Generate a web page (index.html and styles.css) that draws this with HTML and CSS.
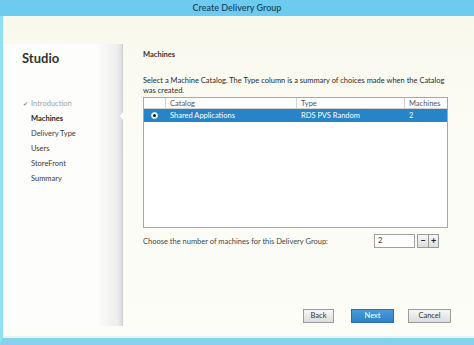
FILE: index.html
```html
<!DOCTYPE html>
<html>
<head>
<meta charset="utf-8">
<link rel="stylesheet" href="styles.css">
</head>
<body>
<div class="window">
  <div class="titlebar">Create Delivery Group</div>
  <div class="main">
    <aside class="sidebar">
      <div class="brand">Studio</div>
      <ul class="steps">
        <li class="step done"><span class="check">✔</span>Introduction</li>
        <li class="step current">Machines</li>
        <li class="step">Delivery Type</li>
        <li class="step">Users</li>
        <li class="step">StoreFront</li>
        <li class="step">Summary</li>
      </ul>
    </aside>
    <section class="content">
      <h2 class="heading">Machines</h2>
      <p class="desc">Select a Machine Catalog. The Type column is a summary of choices made when the Catalog was created.</p>
      <div class="table">
        <div class="row head">
          <div class="cell c-radio"></div>
          <div class="cell c-cat">Catalog</div>
          <div class="cell c-type">Type</div>
          <div class="cell c-mach">Machines</div>
        </div>
        <div class="row selected">
          <div class="cell c-radio"><span class="radio"></span></div>
          <div class="cell c-cat">Shared Applications</div>
          <div class="cell c-type">RDS PVS Random</div>
          <div class="cell c-mach">2</div>
        </div>
      </div>
      <div class="count">
        <span class="count-label">Choose the number of machines for this Delivery Group:</span>
        <div class="spinner">
          <div class="spin-input">2</div>
          <div class="spin-btns">
            <span class="spin-btn">−</span><span class="spin-btn">+</span>
          </div>
        </div>
      </div>
      <div class="actions">
        <button class="btn back">Back</button>
        <button class="btn primary next">Next</button>
        <button class="btn cancel">Cancel</button>
      </div>
    </section>
  </div>
</div>
</body>
</html>
```

FILE: styles.css
```css
* { box-sizing: border-box; }
html, body { margin: 0; padding: 0; }
body {
  width: 474px;
  height: 345px;
  overflow: hidden;
  font-family: Lato, "Open Sans", sans-serif;
  color: #333;
  background: #fbfbf4;
}
.window {
  width: 474px;
  height: 345px;
  display: flex;
  flex-direction: column;
}
.titlebar {
  height: 16px;
  flex: none;
  background: #6dcbef;
  color: #1b4a66;
  font-size: 9px;
  font-weight: 600;
  line-height: 16px;
  text-align: center;
}
.main {
  flex: 1;
  display: flex;
  border-left: 3px solid #8fe1f2;
  border-bottom: 7px solid #86d2ea;
  box-shadow: inset 0 -2px 0 #e2f4f8;
  background: linear-gradient(to bottom, #f8f8ec 0%, #fcfcf6 40%, #fdfdf8 100%);
}
.sidebar {
  width: 120px;
  flex: none;
  margin: 28px 0 12px;
  padding: 5px 0 0 19px;
  background: linear-gradient(to right, #fdfdfb 0%, #fdfdfb 78%, #eeeeee 96%, #dcdcdc 100%);
  border-right: 1px solid #cfcfcf;
  position: relative;
}
.sidebar::after {
  content: "";
  position: absolute;
  right: -1px;
  top: 68px;
  border-style: solid;
  border-width: 4px 3px 4px 0;
  border-color: transparent #ffffff transparent transparent;
}
.brand {
  font-size: 13px;
  font-weight: 700;
  line-height: 18px;
  color: #333;
}
.steps {
  list-style: none;
  margin: 29px 0 0;
  padding: 0 0 0 9px;
}
.step {
  font-size: 7.5px;
  line-height: 15px;
  color: #3a3a3a;
}
.step.done { color: #a3a3a3; }
.step.current { font-weight: 700; color: #1f1f1f; }
.check {
  display: inline-block;
  width: 8px;
  margin-left: -8px;
  font-size: 6px;
  color: #8a8a8a;
}
.content {
  flex: 1;
  display: flex;
  flex-direction: column;
  padding: 34px 23px 15px 20px;
}
.heading {
  margin: 0;
  font-size: 7.5px;
  font-weight: 700;
  line-height: 10px;
  color: #333;
}
.desc {
  margin: 16px 0 0;
  width: 304px;
  font-size: 7.5px;
  line-height: 10px;
  color: #2a2a2a;
}
.table {
  margin-top: 1px;
  width: 305px;
  height: 131px;
  background: #fff;
  border: 1px solid #a8a8a8;
}
.row {
  display: flex;
  font-size: 7.5px;
}
.row.head {
  height: 11px;
  line-height: 11px;
  color: #555;
  border-bottom: 1px solid #d2d2d2;
}
.row.head .cell + .cell { border-left: 1px solid #d2d2d2; }
.row.selected {
  height: 13px;
  line-height: 13px;
  background: #2784c6;
  color: #ffffff;
}
.cell { padding-left: 4px; white-space: nowrap; }
.c-radio { width: 21px; padding: 0; display: flex; align-items: center; justify-content: center; }
.c-cat { width: 131px; }
.c-type { width: 108px; }
.c-mach { flex: 1; }
.row.selected .cell { border-left: 1px solid transparent; }
.row.selected .c-radio { border-left: 0; }
.radio {
  width: 7px;
  height: 7px;
  border-radius: 50%;
  background: #fff;
  border: 1px solid #d8e8f4;
  display: flex;
  align-items: center;
  justify-content: center;
}
.radio::before {
  content: "";
  width: 3px;
  height: 3px;
  border-radius: 50%;
  background: #1a1a1a;
}
.count {
  margin-top: 6px;
  display: flex;
  align-items: center;
  width: 296px;
  justify-content: space-between;
}
.count-label {
  font-size: 7.5px;
  color: #444;
}
.spinner { display: flex; align-items: center; gap: 2px; }
.spin-input {
  width: 41px;
  height: 14px;
  border: 1px solid #a0a0a0;
  background: #fff;
  font-size: 7.5px;
  line-height: 12px;
  padding-left: 3px;
  color: #333;
}
.spin-btns {
  display: flex;
  border: 1px solid #9a9a9a;
  background: linear-gradient(#f6f6f6, #dedede);
}
.spin-btn {
  width: 10px;
  height: 12px;
  font-size: 9px;
  font-weight: 700;
  line-height: 12px;
  text-align: center;
  color: #222;
}
.spin-btn + .spin-btn { border-left: 1px solid #9a9a9a; }
.actions {
  margin-top: auto;
  display: flex;
  justify-content: flex-end;
}
.btn {
  height: 14px;
  padding: 0;
  font-family: inherit;
  font-size: 7.5px;
  line-height: 12px;
  color: #333;
  border: 1px solid #9c9c9c;
  background: linear-gradient(#f7f7f7, #dcdcdc);
}
.back { width: 31px; }
.next { width: 43px; margin-left: 17px; }
.cancel { width: 43px; margin-left: 14px; }
.btn.primary {
  color: #fff;
  background: linear-gradient(#4a9ad8, #2f82c8);
  border-color: #2a6fa8;
}
```
